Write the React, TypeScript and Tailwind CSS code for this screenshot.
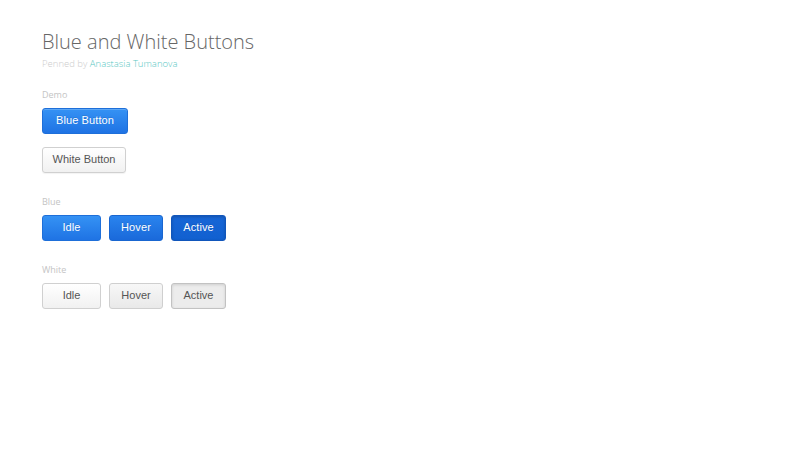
import React from 'react';

const blueBase =
  "h-[26px] rounded-[3px] border text-[11px] text-white tracking-[0.1px] [font-family:'Liberation_Sans',Arial,sans-serif] [text-shadow:0_-1px_0_rgba(0,0,0,0.12)]";
const whiteBase =
  "h-[26px] rounded-[3px] border text-[11px] text-[#555] [font-family:'Liberation_Sans',Arial,sans-serif]";

function Label({ children }: { children: React.ReactNode }) {
  return <div className="text-[9px] text-[#c4c4c4] leading-none mb-[9px]">{children}</div>;
}

export default function App() {
  return (
    <div className="min-h-[450px] bg-white px-[42px] pt-[28px] [font-family:'Open_Sans',sans-serif]">
      <h1 className="text-[20px] font-light text-[#666] leading-[28px]">Blue and White Buttons</h1>
      <p className="text-[9.5px] font-light text-[#ccc] mt-[3px] leading-none">
        Penned by <span className="text-[#5bc8c4]">Anastasia Tumanova</span>
      </p>

      <div className="mt-[21px]">
        <Label>Demo</Label>
        <div className="flex flex-col items-start gap-[13px] mt-[1px]">
          <button className={`${blueBase} w-[86px] border-[#1e6fd9] bg-gradient-to-b from-[#3592f4] to-[#1f73e4] shadow-[inset_0_1px_0_rgba(255,255,255,0.2)]`}>
            Blue Button
          </button>
          <button className={`${whiteBase} text-[10.2px] w-[84px] border-[#d0d0d0] bg-gradient-to-b from-white to-[#f1f1f1] shadow-[0_1px_1px_rgba(0,0,0,0.05)]`}>
            White Button
          </button>
        </div>
      </div>

      <div className="mt-[24px]">
        <Label>Blue</Label>
        <div className="flex gap-[8px]">
          <button className={`${blueBase} w-[59px] border-[#1e6fd9] bg-gradient-to-b from-[#3592f4] to-[#1f73e4]`}>Idle</button>
          <button className={`${blueBase} w-[54px] border-[#1966d0] bg-gradient-to-b from-[#2a84ee] to-[#1a69da]`}>Hover</button>
          <button className={`${blueBase} w-[55px] border-[#1156bb] bg-gradient-to-b from-[#1766d6] to-[#1160d0] shadow-[inset_0_1px_3px_rgba(0,0,0,0.2)]`}>Active</button>
        </div>
      </div>

      <div className="mt-[24px]">
        <Label>White</Label>
        <div className="flex gap-[8px] mt-[1px]">
          <button className={`${whiteBase} w-[59px] border-[#d0d0d0] bg-gradient-to-b from-white to-[#f1f1f1]`}>Idle</button>
          <button className={`${whiteBase} w-[54px] border-[#cfcfcf] bg-gradient-to-b from-[#f7f7f7] to-[#e9e9e9]`}>Hover</button>
          <button className={`${whiteBase} w-[55px] border-[#c2c2c2] bg-[#ececec] shadow-[inset_0_1px_3px_rgba(0,0,0,0.12)]`}>Active</button>
        </div>
      </div>
    </div>
  );
}
